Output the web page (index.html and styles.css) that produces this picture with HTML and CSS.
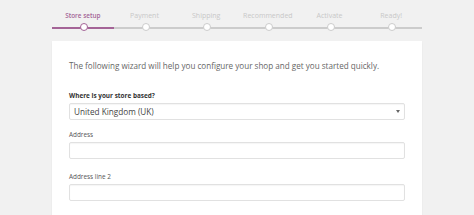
FILE: index.html
```html
<!DOCTYPE html>
<html lang="en">
<head>
    <meta charset="UTF-8">
    <meta name="viewport" content="width=device-width, initial-scale=1.0">
    <title>Setup Wizard</title>
    <link rel="stylesheet" href="styles.css">
</head>
<body>
    <div class="wizard">
        <ol class="steps">
            <li class="active">Store setup</li>
            <li>Payment</li>
            <li>Shipping</li>
            <li>Recommended</li>
            <li>Activate</li>
            <li>Ready!</li>
        </ol>

        <div class="card">
            <p class="intro">The following wizard will help you configure your shop and get you started quickly.</p>

            <label for="country">Where is your store based?</label>
            <div class="select">
                <span>United Kingdom (UK)</span>
                <span class="arrow"></span>
            </div>

            <label for="address">Address</label>
            <input type="text" id="address">

            <label for="address2">Address line 2</label>
            <input type="text" id="address2">
        </div>
    </div>
</body>
</html>
```

FILE: styles.css
```css
* {
    margin: 0;
    padding: 0;
    box-sizing: border-box;
    font-family: "Open Sans", sans-serif;
}

body {
    background-color: #f1f1f1;
    height: 215px;
    overflow: hidden;
}

.wizard {
    width: 370px;
    margin: 0 auto;
    padding-top: 10px;
}

.steps {
    list-style: none;
    display: flex;
}

.steps li {
    flex: 1;
    position: relative;
    text-align: center;
    font-size: 7px;
    line-height: 12px;
    color: #c8c8c8;
    padding-bottom: 5px;
    border-bottom: 2px solid #cccccc;
}

.steps li::after {
    content: "";
    position: absolute;
    left: 50%;
    bottom: -4px;
    width: 6px;
    height: 6px;
    margin-left: -3px;
    border: 1.5px solid #cccccc;
    border-radius: 50%;
    background-color: #fff;
}

.steps li.active {
    color: #a46497;
    font-weight: 600;
    font-size: 6.4px;
    border-bottom-color: #a46497;
}

.steps li.active::after {
    border-color: #a46497;
}

.card {
    margin-top: 12px;
    background-color: #fff;
    padding: 19px 17px 20px;
    box-shadow: 0 1px 2px rgba(0, 0, 0, 0.05);
}

.intro {
    font-size: 8.1px;
    line-height: 12px;
    color: #666;
    margin-bottom: 19px;
}

label {
    display: block;
    font-size: 6.4px;
    line-height: 10px;
    color: #555;
    margin-bottom: 2px;
}

label[for="country"] {
    font-weight: 700;
    color: #333;
}

.select,
input[type="text"] {
    display: block;
    width: 100%;
    height: 17px;
    border: 1px solid #e1e1e1;
    border-radius: 2px;
    background-color: #fff;
    box-shadow: inset 0 1px 1px rgba(0, 0, 0, 0.04);
    margin-bottom: 13px;
}

.select {
    display: flex;
    align-items: center;
    justify-content: space-between;
    padding: 0 4px 0 4px;
    font-size: 8.2px;
    color: #444;
    margin-bottom: 10px;
}

.arrow {
    width: 0;
    height: 0;
    border-left: 2.5px solid transparent;
    border-right: 2.5px solid transparent;
    border-top: 3px solid #666;
}
```
